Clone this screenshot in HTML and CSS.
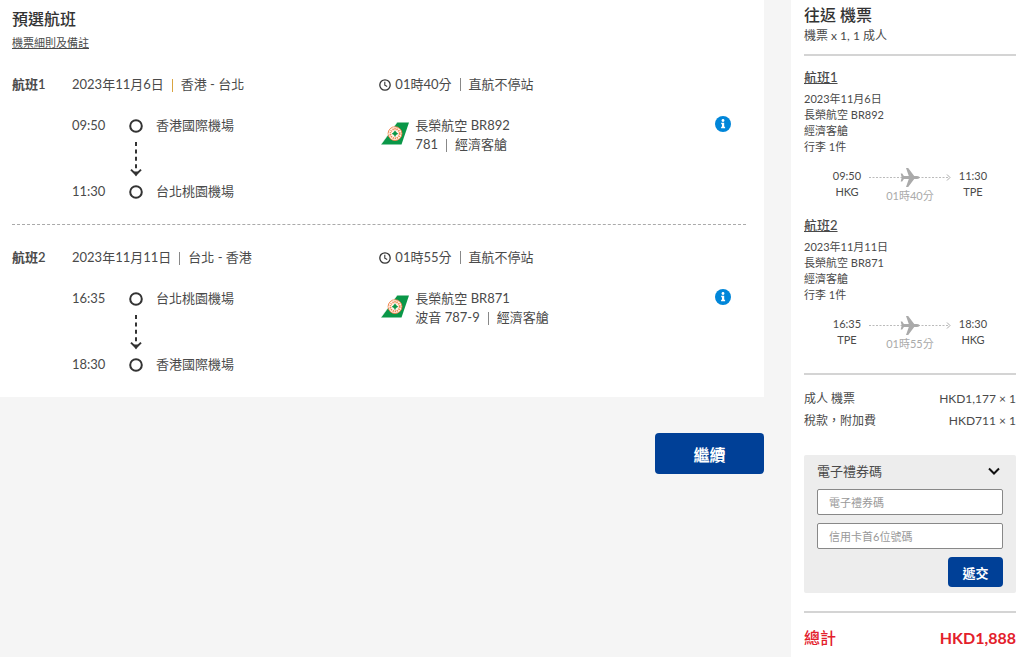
FILE: index.html
```html
<!DOCTYPE html>
<html lang="zh-Hant">
<head>
  <meta charset="UTF-8">
  <meta name="viewport" content="width=device-width, initial-scale=1.0">
  <title>預選航班</title>
  <link rel="stylesheet" href="styles.css">
</head>
<body>

  <!-- Shared icons -->
  <svg class="icon-defs" aria-hidden="true">
    <symbol id="icon-clock" viewBox="0 0 12 12">
      <circle cx="6" cy="6" r="5.2" fill="none" stroke="#333" stroke-width="1.3"/>
      <path d="M5.8 2.8v3.4l2.4 1.2" fill="none" stroke="#333" stroke-width="1.1"/>
    </symbol>
    <symbol id="icon-ring" viewBox="0 0 14 14">
      <circle cx="7" cy="7" r="5.8" fill="none" stroke="#333" stroke-width="2"/>
    </symbol>
    <symbol id="icon-down" viewBox="0 0 14 36">
      <path d="M7 1v28" fill="none" stroke="#333" stroke-width="2" stroke-dasharray="4 3.4"/>
      <path d="M2 28.600L7 33.600l5-5" fill="none" stroke="#333" stroke-width="2"/>
      <path d="M4.500 30.500h5L7 35.500z" fill="#333"/>
    </symbol>
    <symbol id="icon-eva" viewBox="0 0 28 23">
      <path d="M16 .5h12L20.500 22.500H0z" fill="#0a9748"/>
      <circle cx="14" cy="11.600" r="6.900" fill="#fff4e8" stroke="#ef7d45" stroke-width=".9"/>
      <circle cx="14" cy="11.600" r="4.700" fill="none" stroke="#ef7d45" stroke-width="1.800" stroke-dasharray="1.200 .9"/>
      <circle cx="14" cy="11.600" r="2" fill="#0a9748"/>
      <path d="M14 8.800v5.600M11.200 11.600h5.600" stroke="#0a9748" stroke-width="1.300"/>
      <path d="M16 .5L0 22.500" stroke="#fff" stroke-width=".5"/>
    </symbol>
    <symbol id="icon-info" viewBox="0 0 16 16">
      <circle cx="8" cy="8" r="8" fill="#0086d9"/>
      <circle cx="8" cy="4.500" r="1.400" fill="#fff"/>
      <path d="M6.200 6.800h3v4h.9V12.200H6.100V10.800h.9V8.200h-.8z" fill="#fff"/>
    </symbol>
    <symbol id="icon-plane" viewBox="0 0 82 20">
      <path d="M0 9.500h80" fill="none" stroke="#bbb" stroke-width="1" stroke-dasharray="2 1.500"/>
      <path d="M78 6.500l3 3-3 3" fill="none" stroke="#aaa" stroke-width="1"/>
      <path d="M37 0h2.200l6 8H48c1.600 0 2.600.8 2.600 1.500S49.600 11 48 11h-2.800l-6 8H37l2.800-8h-4.900l-1.700 2.600h-1.500l1-4.100-1-4.100h1.500L34.900 8h4.900z" fill="#aaa"/>
    </symbol>
  </svg>

  <div class="page">
    <main class="main">
      <section class="card">
        <h1>預選航班</h1>
        <a href="#" class="rules-link">機票細則及備註</a>

        <!-- Flight 1 -->
        <article class="flight">
          <h2>航班1</h2>
          <div class="route">
            <p>2023年11月6日<span class="bar bar-gold"></span>香港 - 台北</p>
            <div class="stops">
              <span>09:50</span>
              <svg class="ring"><use href="#icon-ring"/></svg>
              <span>香港國際機場</span>
              <svg class="down"><use href="#icon-down"/></svg>
              <span>11:30</span>
              <svg class="ring"><use href="#icon-ring"/></svg>
              <span>台北桃園機場</span>
            </div>
          </div>
          <div class="details">
            <p class="duration"><svg class="clock"><use href="#icon-clock"/></svg>01時40分<span class="bar"></span>直航不停站</p>
            <div class="airline">
              <svg class="logo"><use href="#icon-eva"/></svg>
              <div>
                <p>長榮航空 BR892</p>
                <p>781<span class="bar"></span>經濟客艙</p>
              </div>
              <button type="button" class="info" aria-label="航班1"><svg><use href="#icon-info"/></svg></button>
            </div>
          </div>
        </article>

        <!-- Flight 2 -->
        <article class="flight">
          <h2>航班2</h2>
          <div class="route">
            <p>2023年11月11日<span class="bar"></span>台北 - 香港</p>
            <div class="stops">
              <span>16:35</span>
              <svg class="ring"><use href="#icon-ring"/></svg>
              <span>台北桃園機場</span>
              <svg class="down"><use href="#icon-down"/></svg>
              <span>18:30</span>
              <svg class="ring"><use href="#icon-ring"/></svg>
              <span>香港國際機場</span>
            </div>
          </div>
          <div class="details">
            <p class="duration"><svg class="clock"><use href="#icon-clock"/></svg>01時55分<span class="bar"></span>直航不停站</p>
            <div class="airline">
              <svg class="logo"><use href="#icon-eva"/></svg>
              <div>
                <p>長榮航空 BR871</p>
                <p>波音 787-9<span class="bar"></span>經濟客艙</p>
              </div>
              <button type="button" class="info" aria-label="航班2"><svg><use href="#icon-info"/></svg></button>
            </div>
          </div>
        </article>
      </section>

      <button type="button" class="btn btn-continue">繼續</button>
    </main>

    <!-- Price summary -->
    <aside class="summary">
      <h2>往返 機票</h2>
      <p class="summary-sub">機票 x 1, 1 成人</p>

      <section class="trips">
        <article class="trip">
          <h3>航班1</h3>
          <p>2023年11月6日</p>
          <p>長榮航空 BR892</p>
          <p>經濟客艙</p>
          <p>行李 1件</p>
          <div class="trip-line">
            <div class="trip-end">09:50<br>HKG</div>
            <div class="trip-mid">
              <svg><use href="#icon-plane"/></svg>
              <span>01時40分</span>
            </div>
            <div class="trip-end">11:30<br>TPE</div>
          </div>
        </article>
        <article class="trip">
          <h3>航班2</h3>
          <p>2023年11月11日</p>
          <p>長榮航空 BR871</p>
          <p>經濟客艙</p>
          <p>行李 1件</p>
          <div class="trip-line">
            <div class="trip-end">16:35<br>TPE</div>
            <div class="trip-mid">
              <svg><use href="#icon-plane"/></svg>
              <span>01時55分</span>
            </div>
            <div class="trip-end">18:30<br>HKG</div>
          </div>
        </article>
      </section>

      <dl class="fees">
        <div><dt>成人 機票</dt><dd>HKD1,177 × 1</dd></div>
        <div><dt>稅款，附加費</dt><dd>HKD711 × 1</dd></div>
      </dl>

      <form class="coupon">
        <button type="button" class="coupon-toggle" aria-expanded="true">
          電子禮券碼
          <svg viewBox="0 0 12 8"><path d="M1 1.500l5 5 5-5" fill="none" stroke="#111" stroke-width="2"/></svg>
        </button>
        <input type="text" aria-label="電子禮券碼" placeholder="電子禮券碼">
        <input type="text" aria-label="信用卡首6位號碼" placeholder="信用卡首6位號碼">
        <button type="button" class="btn btn-submit">遞交</button>
      </form>

      <div class="total"><span>總計</span><strong>HKD1,888</strong></div>
    </aside>
  </div>

</body>
</html>
```

FILE: styles.css
```css
/* Global Styles */
* {
  box-sizing: border-box;
}

body {
  font-family: Lato, 'Noto Sans CJK TC', sans-serif;
  font-size: 13px;
  line-height: 19px;
  color: #4a4a4a;
  background-color: #f5f5f5;
  margin: 0;
}

h1, h2, h3, p, dl, dd {
  margin: 0;
}

button, input {
  font-family: inherit;
}

svg {
  display: block;
  flex: none;
}

.icon-defs {
  display: none;
}

.page {
  display: flex;
  gap: 27px;
  min-height: 100vh;
}

.main {
  flex: 1;
  display: flex;
  flex-direction: column;
  align-items: flex-end;
}

/* Flight card */
.card {
  width: 100%;
  background-color: #fff;
  padding: 9px 18px 0 12px;
}

.card h1 {
  font-size: 16px;
  line-height: 20px;
  font-weight: 500;
  color: #333;
}

.rules-link {
  display: inline-block;
  font-size: 11px;
  line-height: 19px;
  margin-top: 4px;
  color: #4a4a4a;
}

.flight {
  display: grid;
  grid-template-columns: 60px 5fr 6fr;
  padding: 23px 0;
}

.flight + .flight {
  border-top: 1px dashed #aaa;
}

.flight h2 {
  font-size: 13px;
  line-height: 19px;
  font-weight: 600;
}

.bar {
  display: inline-block;
  width: 1px;
  height: 13px;
  margin: 0 8px;
  background-color: #888;
  vertical-align: -3px;
}

.bar-gold {
  background-color: #d9a441;
}

.stops {
  display: grid;
  grid-template-columns: 57px 14px auto;
  grid-template-rows: 19px 47px 19px;
  align-items: center;
  margin-top: 22px;
}

.stops span:nth-of-type(even) {
  padding-left: 13px;
}

.ring {
  width: 14px;
  height: 14px;
}

.down {
  grid-column: 2;
  width: 14px;
  height: 36px;
}

.stops .down + span {
  grid-column: 1;
}

.duration {
  display: flex;
  align-items: center;
}

.clock {
  width: 12px;
  height: 12px;
  margin: 0 4px 0 1px;
}

.airline {
  display: flex;
  align-items: flex-start;
  margin-top: 22px;
}

.logo {
  width: 28px;
  height: 23px;
  margin: 6px 6px 0 3px;
}

.info {
  width: 16px;
  height: 16px;
  padding: 0;
  border: none;
  background: none;
  margin: 0 15px 0 auto;
  cursor: pointer;
}

.info svg {
  width: 16px;
  height: 16px;
}

/* Buttons */
.btn {
  background-color: #004097;
  color: #fff;
  border: none;
  border-radius: 4px;
  font-weight: bold;
  cursor: pointer;
}

.btn-continue {
  width: 109px;
  height: 41px;
  margin-top: 36px;
  font-size: 16px;
}

.btn-submit {
  width: 55px;
  height: 30px;
  padding: 0;
  font-size: 13px;
}

/* Summary */
.summary {
  width: 233px;
  background-color: #fff;
  padding: 5px 8px 6px 13px;
}

.summary h2 {
  font-size: 16px;
  line-height: 20px;
  font-weight: 500;
  color: #333;
}

.summary-sub {
  font-size: 12px;
  line-height: 20px;
  margin: 1px 0 8px;
}

.trips {
  border-top: 2px solid #d4d4d4;
  border-bottom: 2px solid #d4d4d4;
  padding: 11px 0 10px;
}

.trip {
  font-size: 11px;
  line-height: 16px;
  padding-bottom: 11px;
}

.trip h3 {
  font-size: 13px;
  line-height: 20px;
  font-weight: 500;
  text-decoration: underline;
  margin-bottom: 4px;
}

.trip-line {
  display: flex;
  justify-content: center;
  text-align: center;
  padding-top: 13px;
}

.trip-end {
  width: 44px;
}

.trip-mid {
  width: 82px;
  color: #aaa;
}

.trip-mid svg {
  width: 82px;
  height: 20px;
}

.fees {
  font-size: 12px;
  line-height: 20px;
  padding: 14px 0 24px;
}

.fees div {
  display: flex;
  justify-content: space-between;
}

.fees div + div {
  margin-top: 2px;
}

/* Coupon form */
.coupon {
  display: flex;
  flex-direction: column;
  align-items: flex-end;
  gap: 8px;
  background-color: #ededed;
  border-radius: 2px;
  padding: 6px 13px;
}

.coupon-toggle {
  display: flex;
  justify-content: space-between;
  align-items: center;
  width: 100%;
  padding: 0 3px 0 0;
  border: none;
  background: none;
  font-size: 13px;
  line-height: 20px;
  color: #4a4a4a;
  cursor: pointer;
}

.coupon-toggle svg {
  width: 12px;
  height: 8px;
}

.coupon input {
  width: 100%;
  height: 26px;
  padding: 0 11px;
  border: 1px solid #888;
  border-radius: 2px;
  font-size: 11px;
}

.coupon input::placeholder {
  color: #999;
}

.total {
  display: flex;
  justify-content: space-between;
  border-top: 2px solid #d4d4d4;
  margin-top: 18px;
  padding-top: 13px;
  font-size: 16px;
  line-height: 24px;
  font-weight: 500;
  color: #e3202b;
}
```
